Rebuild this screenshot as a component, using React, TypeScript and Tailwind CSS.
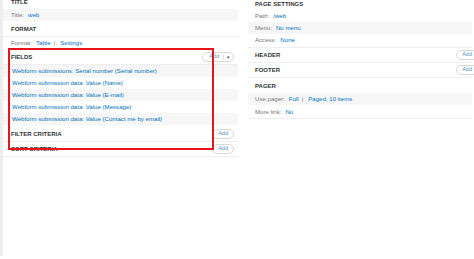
import React from "react";

const Hdr = ({ label, add, drop, right }: { label: string; add?: boolean; drop?: boolean; right?: boolean }) => (
  <div className={"h-[15px] flex items-center justify-between border-b border-[#eeeeee] pl-[8px] " + (right ? "pr-0" : "pr-[4px]")}>
    <span className="text-[6px] font-bold text-[#333333] uppercase">{label}</span>
    {add && (
      <span className={"h-[10px] flex items-center rounded-full border border-[#d8d8d8] bg-white text-[5.5px] text-[#5a8fc0] " + (right ? "-mr-[6px]" : "")}>
        <span className={drop ? "pl-[6px] pr-[4px] border-r border-[#e4e4e4]" : "px-[5px]"}>Add</span>
        {drop && <span className="px-[3px] text-[5px] text-[#555]">▾</span>}
      </span>
    )}
  </div>
);

const Row = ({ gray, children }: { gray?: boolean; children: React.ReactNode }) => (
  <div className={"h-[12px] flex items-center pl-[8px] text-[6.1px] " + (gray ? "bg-[#f6f6f6]" : "bg-white")}>
    {children}
  </div>
);

const L = ({ children }: { children: React.ReactNode }) => <span className="text-[#0074bd]">{children}</span>;
const G = ({ children }: { children: React.ReactNode }) => <span className="text-[#777777] mr-[4px]">{children}</span>;

export default function App() {
  return (
    <div className="w-[474px] h-[259px] bg-white overflow-hidden relative flex font-['Liberation_Sans',Arial,sans-serif] leading-none">
      <div className="w-[3px] h-[256px] bg-[#eeeeee] shrink-0" />
      <div className="w-[235px] shrink-0 flex flex-col -mt-[5px]">
        <div className="h-[14px] flex items-center pl-[8px]">
          <span className="text-[6px] font-bold text-[#333333]">TITLE</span>
        </div>
        <Row gray>
          <G>Title:</G>
          <L>web</L>
        </Row>
        <div className="h-[1px]" />
        <Hdr label="Format" />
        <Row>
          <G>Format:</G>
          <L>Table</L>
          <span className="text-[#777] mx-[3px]">|</span>
          <span className="ml-[2px]"><L>Settings</L></span>
        </Row>
        <div className="h-[1px]" />
        <Hdr label="Fields" add drop />
        <Row gray><span className="ml-[1px]"><L>Webform submissions: Serial number (Serial number)</L></span></Row>
        <Row><span className="ml-[1px]"><L>Webform submission data: Value (Name)</L></span></Row>
        <Row gray><span className="ml-[1px]"><L>Webform submission data: Value (E-mail)</L></span></Row>
        <Row><span className="ml-[1px]"><L>Webform submission data: Value (Message)</L></span></Row>
        <Row gray><span className="ml-[1px]"><L>Webform submission data: Value (Contact me by email)</L></span></Row>
        <div className="h-[2px]" />
        <Hdr label="Filter criteria" add />
        <Hdr label="Sort criteria" add />
      </div>
      <div className="w-[10px] shrink-0" />
      <div className="w-[224px] shrink-0 flex flex-col -mt-[3px]">
        <div className="h-[13px] flex items-center pl-[7px]">
          <span className="text-[6px] font-bold text-[#333333]">PAGE SETTINGS</span>
        </div>
        <div className="[&>div]:pl-[7px]">
          <Row><G>Path:</G><L>/web</L></Row>
          <Row gray><G>Menu:</G><L>No menu</L></Row>
          <Row><G>Access:</G><L>None</L></Row>
        </div>
        <div className="h-[2px] border-b border-[#eeeeee]" />
        <div className="[&>div]:pl-[7px]">
          <Hdr label="Header" add right />
          <Hdr label="Footer" add right />
          <div className="h-[15px] flex items-center">
            <span className="text-[6px] font-bold text-[#333333]">PAGER</span>
          </div>
          <Row gray>
            <G>Use pager:</G>
            <L>Full</L>
            <span className="text-[#777] mx-[3px]">|</span>
            <span className="ml-[2px]"><L>Paged, 10 items</L></span>
          </Row>
          <div className="h-[1px]" />
          <Row><G>More link:</G><L>No</L></Row>
        </div>
        <div className="h-[1px] bg-[#eeeeee]" />
      </div>
      <div className="absolute left-[8px] top-[48px] w-[206px] h-[102px] border-2 border-[#e8141c]" />
    </div>
  );
}
